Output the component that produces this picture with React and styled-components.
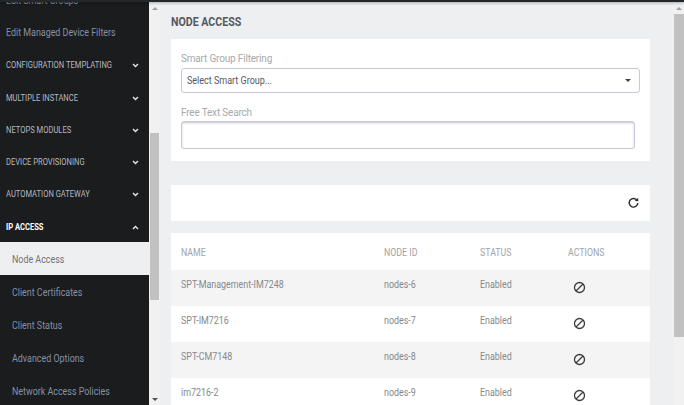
import React from "react";
import styled, { createGlobalStyle } from "styled-components";

const Global = createGlobalStyle`
  html, body { margin: 0; padding: 0; width: 684px; height: 405px; overflow: hidden; background: #eeeff1; }
  * { box-sizing: border-box; }
  body { font-family: Roboto, "Liberation Sans", sans-serif; }
`;

const Page = styled.div`
  width: 684px; height: 405px; display: flex; flex-direction: column; overflow: hidden;
`;
const TopEdge = styled.div`
  height: 2px; flex: none; background: #24272a; box-shadow: 0 1px 3px rgba(0,0,0,.35); position: relative; z-index: 2;
`;
const Body = styled.div`
  flex: 1; min-height: 0; display: flex;
`;
const Sidebar = styled.nav`
  width: 149px; flex: none; background: #1a1c1e; overflow: hidden;
`;
const NavList = styled.div`
  margin-top: -18px; display: flex; flex-direction: column;
`;
/* The reference's typeface is narrower than any installed family */
const Narrow = styled.span`
  display: inline-block; white-space: nowrap; transform-origin: left center;
  transform: scaleX(${p => p.$x || 0.89});
`;
const NavText = styled.span`
  flex: 1; min-width: 0;
`;
const NavLink = styled.div`
  height: 32.3px; display: flex; align-items: center;
  padding: 0 10px 0 6px; font-size: 10px; color: #8591a6; white-space: nowrap;
`;
const Section = styled(NavLink)`
  font-size: 9.6px; color: ${p => (p.$open ? "#fff" : "#b4b9c0")};
  font-weight: ${p => (p.$open ? 700 : 400)};
`;
const SubLink = styled(NavLink)`
  padding-left: 12px; height: 33px; padding-top: 1px;
  background: ${p => (p.$active ? "#eeeff1" : "transparent")};
  color: ${p => (p.$active ? "#6e7378" : "#8591a6")};
`;
const Chevron = styled.svg`
  width: 7px; height: 5px; flex: none; margin-top: 2px;
`;
const Track = styled.div`
  width: ${p => p.$w}px; flex: none; background: #f1f1f1; display: flex; flex-direction: column; align-items: stretch;
`;
const Arrow = styled.div`
  height: 12px; flex: none; display: flex; align-items: center; justify-content: center;
  &::before {
    content: ""; border-left: 3px solid transparent; border-right: 3px solid transparent;
    ${p => (p.$down ? "border-top: 3px solid #505050;" : "border-bottom: 3px solid #a0a0a0;")}
  }
`;
const Thumb = styled.div`
  height: ${p => p.$h}px; flex: none; margin: ${p => p.$mt}px ${p => p.$mx}px 0; background: #c1c1c1;
`;
const Spacer = styled.div`flex: 1;`;
const Main = styled.main`
  flex: 1; min-width: 0; background: #eeeff1; padding: 0 24px 0 11px; overflow: hidden;
`;
const Title = styled.h1`
  margin: 0; height: 37px; display: flex; align-items: center; padding-top: 2px;
  font-size: 12px; font-weight: 700; color: #55595f;
`;
const Card = styled.section`
  background: #fff; width: 479px;
`;
const FilterCard = styled(Card)`
  height: 122px; padding: 13px 10px 0; display: flex; flex-direction: column;
`;
const Label = styled.label`
  font-size: 10px; color: #a6a9ad; height: 16px; line-height: 13px; letter-spacing: -.18px;
`;
const Select = styled.div`
  width: 459px; height: 25px; border: 1px solid #c6c9dc; border-radius: 3px;
  display: flex; align-items: center; justify-content: space-between; padding: 0 8px 0 5px;
  font-size: 10px; color: #55595f; margin-bottom: 13px;
  &::after {
    content: ""; border-left: 3px solid transparent; border-right: 3px solid transparent; border-top: 3px solid #444;
  }
`;
const SearchInput = styled.div`
  width: 454px; height: 28px; margin-top: -1px; border: 1px solid #c6c9dc; border-radius: 3px;
  box-shadow: inset 0 1px 2px rgba(60,60,90,.3);
`;
const ToolCard = styled(Card)`
  height: 36px; margin-top: 24px; display: flex; align-items: center; justify-content: flex-end; padding: 0 11px 2px 0;
`;
const TableCard = styled(Card)`
  margin-top: 12px;
`;
const Table = styled.div`
  display: grid; grid-template-columns: 203px 96px 88px 92px;
`;
const HeadCell = styled.div`
  height: 37px; display: flex; align-items: center; padding: 1px 0 0 10px;
  font-size: 10px; color: #a0a3a7;
`;
const Row = styled.div`
  display: contents;
  & > * { background: ${p => (p.$odd ? "#f4f4f5" : "#fff")}; }
`;
const Cell = styled.div`
  height: 36px; padding: 8px 0 0 10px; font-size: 10px; line-height: 13px; color: #85888c;
`;
const ActionCell = styled(Cell)`
  padding: 11px 0 0 15px;
`;

const Down = () => (
  <Chevron viewBox="0 0 7 5"><path d="M1 1l2.5 2.5L6 1" fill="none" stroke="#e8e8e8" strokeWidth="1.4" /></Chevron>
);
const Up = () => (
  <Chevron viewBox="0 0 7 5"><path d="M1 4l2.5-2.5L6 4" fill="none" stroke="#e8e8e8" strokeWidth="1.4" /></Chevron>
);
const Ban = () => (
  <svg width="13" height="13" viewBox="0 0 13 13" style={{ display: "block" }}>
    <circle cx="6.5" cy="6.5" r="5" fill="none" stroke="#3c3c3c" strokeWidth="1.3" />
    <path d="M3 10L10 3" stroke="#3c3c3c" strokeWidth="1.3" />
  </svg>
);
const Refresh = () => (
  <svg width="11" height="11" viewBox="0 0 10 10" style={{ display: "block" }}>
    <path d="M8.3 3.2A3.9 3.9 0 1 0 8.9 5.6" fill="none" stroke="#2b2f33" strokeWidth="1.3" />
    <path d="M6.2 3.7L9.4 3.9L9.2 .6Z" fill="#2b2f33" />
  </svg>
);

const rows = [
  ["SPT-Management-IM7248", "nodes-6"],
  ["SPT-IM7216", "nodes-7"],
  ["SPT-CM7148", "nodes-8"],
  ["im7216-2", "nodes-9"],
];
const sections = ["CONFIGURATION TEMPLATING", "MULTIPLE INSTANCE", "NETOPS MODULES", "DEVICE PROVISIONING", "AUTOMATION GATEWAY"];
const links = ["Client Certificates", "Client Status", "Advanced Options", "Network Access Policies"];

export default function App() {
  return (
    <Page>
      <Global />
      <TopEdge />
      <Body>
        <Sidebar>
          <NavList>
            <NavLink><Narrow>Edit Smart Groups</Narrow></NavLink>
            <NavLink><Narrow>Edit Managed Device Filters</Narrow></NavLink>
            {sections.map(s => (
              <Section key={s}><NavText><Narrow $x={0.79}>{s}</Narrow></NavText><Down /></Section>
            ))}
            <Section $open><NavText><Narrow $x={0.79}>IP ACCESS</Narrow></NavText><Up /></Section>
            <SubLink $active><Narrow>Node Access</Narrow></SubLink>
            {links.map(l => (
              <SubLink key={l}><Narrow>{l}</Narrow></SubLink>
            ))}
          </NavList>
        </Sidebar>
        <Track $w={11}>
          <Arrow />
          <Thumb $mt={119} $mx={1} $h={167} />
          <Spacer />
          <Arrow $down />
        </Track>
        <Main>
          <Title><Narrow $x={0.885}>NODE ACCESS</Narrow></Title>
          <FilterCard>
            <Label>Smart Group Filtering</Label>
            <Select><Narrow $x={0.9}>Select Smart Group...</Narrow></Select>
            <Label>Free Text Search</Label>
            <SearchInput />
          </FilterCard>
          <ToolCard><Refresh /></ToolCard>
          <TableCard>
            <Table>
              {["NAME", "NODE ID", "STATUS", "ACTIONS"].map(h => (
                <HeadCell key={h}><Narrow $x={0.88}>{h}</Narrow></HeadCell>
              ))}
              {rows.map((r, i) => (
                <Row key={r[1]} $odd={i % 2 === 0}>
                  <Cell><Narrow>{r[0]}</Narrow></Cell>
                  <Cell><Narrow>{r[1]}</Narrow></Cell>
                  <Cell><Narrow>Enabled</Narrow></Cell>
                  <ActionCell><Ban /></ActionCell>
                </Row>
              ))}
            </Table>
          </TableCard>
        </Main>
        <Track $w={10}>
          <Arrow />
          <Thumb $mt={0} $mx={0} $h={323} />
        </Track>
      </Body>
    </Page>
  );
}
